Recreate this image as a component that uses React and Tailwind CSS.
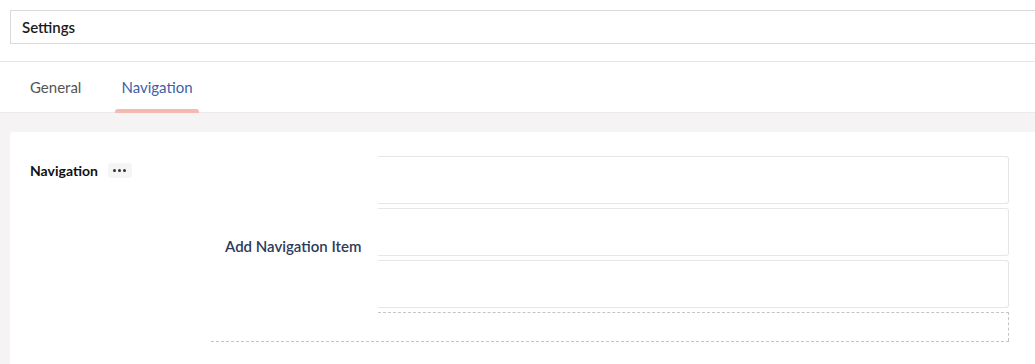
import React from 'react'

const font = { fontFamily: 'Lato, "Open Sans", sans-serif' }

const NavBox = () => (
  <div className="h-[48px] border-y border-r border-[#e6e6e6] rounded-r-[3px] bg-white" />
)

export default function App() {
  return (
    <div className="w-[1035px] h-[364px] bg-white overflow-hidden flex flex-col" style={font}>
      {/* Header */}
      <div className="h-[62px] pt-[10px] pl-[10px] border-b border-[#e6e6e6]">
        <div className="h-[34px] border border-r-0 border-[#d9d9d9] flex items-center pl-[11px]">
          <span className="text-[15px] font-semibold text-[#1a1a1a]">Settings</span>
        </div>
      </div>

      {/* Tabs */}
      <div className="h-[51px] flex items-end pl-[16px] gap-[20px] border-b border-[#ebe9ea]">
        <div className="h-full flex items-center px-[14px]">
          <span className="text-[15px] text-[#555]">General</span>
        </div>
        <div className="h-full flex items-center px-[6px] relative">
          <span className="text-[15px] text-[#3b62ad]">Navigation</span>
          <span className="absolute left-0 right-0 bottom-[-1px] h-[4px] rounded-t-[3px] bg-[#f4bab2]" />
        </div>
      </div>

      {/* Body */}
      <div className="flex-1 bg-[#f5f3f4] pt-[19px] pl-[10px]">
        <div className="h-full bg-white rounded-tl-[3px] pt-[24px] pl-[20px] flex">
          <div className="w-[181px]">
            <div className="h-[28px] flex items-center">
              <span className="text-[14px] font-bold text-[#111]">Navigation</span>
              <button className="ml-[10px] w-[24px] h-[15px] rounded-[3px] bg-[#f5f5f5] flex items-center justify-center gap-[2px]">
                <span className="w-[3px] h-[3px] rounded-full bg-[#333]" />
                <span className="w-[3px] h-[3px] rounded-full bg-[#333]" />
                <span className="w-[3px] h-[3px] rounded-full bg-[#333]" />
              </button>
            </div>
          </div>

          <div className="w-[798px] self-start flex border-b border-dashed border-[#c4c4c4]">
            <div className="w-[167px] flex items-center pl-[14px] pb-[4px]">
              <span className="text-[15px] font-semibold text-[#2e3a5c]">Add Navigation Item</span>
            </div>
            <div className="flex-1 flex flex-col gap-[4px]">
              <NavBox />
              <NavBox />
              <NavBox />
              <div className="h-[29px] border-t border-r border-dashed border-[#c4c4c4]" />
            </div>
          </div>
        </div>
      </div>
    </div>
  )
}
